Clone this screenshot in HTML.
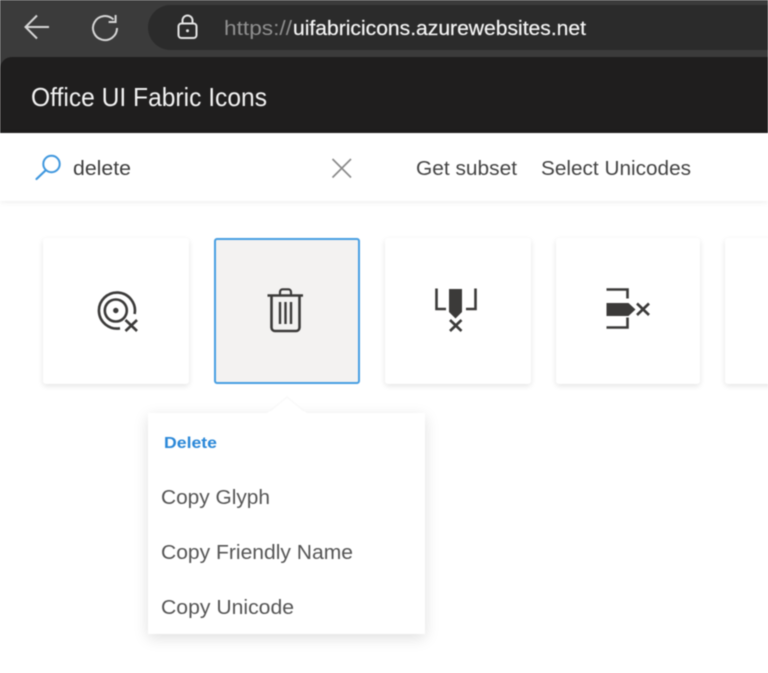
<!DOCTYPE html>
<html lang="en">
<head>
<meta charset="utf-8">
<title>Office UI Fabric Icons</title>
<style>
html,body{margin:0;padding:0;width:768px;height:673px;overflow:hidden;background:#fff}
.wrap{position:relative;width:768px;height:673px;overflow:hidden;filter:blur(.45px);background:#fff}
.abs{position:absolute}
.card{position:absolute;top:238px;width:146px;height:146px;background:#fff;border-radius:3px;box-shadow:0 2px 6px rgba(0,0,0,.11)}
svg{position:absolute;left:0;top:0}
text{font-family:"Liberation Sans",sans-serif}
</style>
</head>
<body>
<div class="wrap">
  <div class="abs" style="left:0;top:0;width:768px;height:70px;background:#3b3b3b"></div>
  <div class="abs" style="left:148px;top:5px;width:640px;height:45px;border-radius:23px 0 0 23px;background:#2b2b2b"></div>
  <div class="abs" style="left:0;top:57px;width:768px;height:76px;background:#1f1e1e;border-radius:12px 0 0 0"></div>
  <div class="abs" style="left:0;top:133px;width:768px;height:68px;background:#fff;box-shadow:0 1px 6px rgba(0,0,0,.08)"></div>

  <div class="card" style="left:43px"></div>
  <div class="card" style="left:214px;width:142px;height:142px;background:#f3f2f1;border:2px solid #479ee2;border-radius:3px;box-shadow:none"></div>
  <div class="card" style="left:385px"></div>
  <div class="card" style="left:556px;width:144px"></div>
  <div class="card" style="left:725px;width:100px"></div>

  <div class="abs" style="left:148px;top:413px;width:277px;height:221px;background:#fff;box-shadow:0 4px 14px rgba(0,0,0,.13)"></div>

  <svg width="768" height="673" viewBox="0 0 768 673" xmlns="http://www.w3.org/2000/svg">
    <!-- popup beak -->
    <path d="M266 414 L287 396 L308 414 Z" fill="#fff"/>
    <path d="M270 411 L287 397 L304 411" fill="none" stroke="#000" stroke-opacity=".025" stroke-width="1.5"/>

    <!-- browser back -->
    <path d="M49 27 H26 M37 15.5 L25.5 27 L37 38.5" fill="none" stroke="#d6d6d6" stroke-width="2"/>
    <!-- refresh -->
    <path d="M113.5 19.6 A12 12 0 1 0 117 28" fill="none" stroke="#d6d6d6" stroke-width="2"/>
    <path d="M115.6 15 V22 H108.6" fill="none" stroke="#d6d6d6" stroke-width="2"/>
    <!-- lock -->
    <rect x="178.5" y="23.5" width="18" height="14.5" rx="3" fill="none" stroke="#e4e4e4" stroke-width="2"/>
    <path d="M182.5 23 V20.5 A5 5 0 0 1 192.5 20.5 V23" fill="none" stroke="#e4e4e4" stroke-width="2"/>
    <circle cx="187.5" cy="30.8" r="1.5" fill="#e4e4e4"/>

    <!-- URL -->
    <text x="224" y="35" font-size="20" fill="#8f8f8f" textLength="68" lengthAdjust="spacingAndGlyphs">https://</text>
    <text x="293" y="35" font-size="20" fill="#f4f4f4" stroke="#f4f4f4" stroke-width=".2" textLength="293" lengthAdjust="spacingAndGlyphs">uifabricicons.azurewebsites.net</text>

    <!-- Title -->
    <text x="31" y="106" font-size="26" fill="#f2f2f2" textLength="236" lengthAdjust="spacingAndGlyphs">Office UI Fabric Icons</text>

    <!-- search -->
    <circle cx="51.5" cy="164" r="8.2" fill="none" stroke="#3f97de" stroke-width="2"/>
    <path d="M45.5 170.5 L36.5 179" fill="none" stroke="#3f97de" stroke-width="2.2" stroke-linecap="round"/>
    <text x="73" y="175" font-size="20" fill="#3e3e3e" textLength="58" lengthAdjust="spacingAndGlyphs">delete</text>
    <path d="M332.5 159 L351 177.5 M351 159 L332.5 177.5" fill="none" stroke="#8a8a8a" stroke-width="1.7"/>
    <text x="416" y="175" font-size="20" fill="#444" textLength="101" lengthAdjust="spacingAndGlyphs">Get subset</text>
    <text x="541" y="175" font-size="20" fill="#444" textLength="150" lengthAdjust="spacingAndGlyphs">Select Unicodes</text>

    <!-- target x icon -->
    <path d="M134.6 314 A18 18 0 1 0 120 328.3" fill="none" stroke="#3b3a39" stroke-width="2.6"/>
    <circle cx="115.8" cy="310.5" r="11" fill="none" stroke="#3b3a39" stroke-width="2.6"/>
    <circle cx="115.8" cy="310.5" r="2.7" fill="#3b3a39"/>
    <path d="M125.5 320 L137 331 M137 320 L125.5 331" fill="none" stroke="#3b3a39" stroke-width="2.6"/>

    <!-- trash -->
    <path d="M267.5 295.5 H303" fill="none" stroke="#3b3a39" stroke-width="2.6"/>
    <path d="M280 295 V292 A2.6 2.6 0 0 1 282.6 289.3 H288.4 A2.6 2.6 0 0 1 291 292 V295" fill="none" stroke="#3b3a39" stroke-width="2.2"/>
    <path d="M271.5 296 V327.5 A3.6 3.6 0 0 0 275 331 H296 A3.6 3.6 0 0 0 299.5 327.5 V296" fill="none" stroke="#3b3a39" stroke-width="2.6"/>
    <path d="M280 302 V324 M285.5 302 V324 M291 302 V324" fill="none" stroke="#3b3a39" stroke-width="2.4"/>

    <!-- pen bracket x (vertical) -->
    <path d="M449 289 H462 V312 L455.5 318.5 L449 312 Z" fill="#3b3a39"/>
    <path d="M436.5 288.5 V309 H446 M475.5 288.5 V309 H466" fill="none" stroke="#3b3a39" stroke-width="2.6"/>
    <path d="M450 320 L461.5 331 M461.5 320 L450 331" fill="none" stroke="#3b3a39" stroke-width="2.6"/>

    <!-- pen bracket x (horizontal) -->
    <path d="M606.5 303 H628.5 L635.5 309.5 L628.5 316 H606.5 Z" fill="#3b3a39"/>
    <path d="M606.5 289.5 H627.5 V298.5 M606.5 327.5 H627.5 V317.5" fill="none" stroke="#3b3a39" stroke-width="2.6"/>
    <path d="M637 303.5 L649 315 M649 303.5 L637 315" fill="none" stroke="#3b3a39" stroke-width="2.6"/>

    <!-- popup text -->
    <text x="164" y="448" font-size="16" font-weight="700" fill="#2b88d8" textLength="53" lengthAdjust="spacingAndGlyphs">Delete</text>
    <text x="161" y="504" font-size="20" fill="#555" textLength="109" lengthAdjust="spacingAndGlyphs">Copy Glyph</text>
    <text x="161" y="559" font-size="20" fill="#555" textLength="192" lengthAdjust="spacingAndGlyphs">Copy Friendly Name</text>
    <text x="161" y="614" font-size="20" fill="#555" textLength="133" lengthAdjust="spacingAndGlyphs">Copy Unicode</text>
  </svg>
</div>
</body>
</html>
